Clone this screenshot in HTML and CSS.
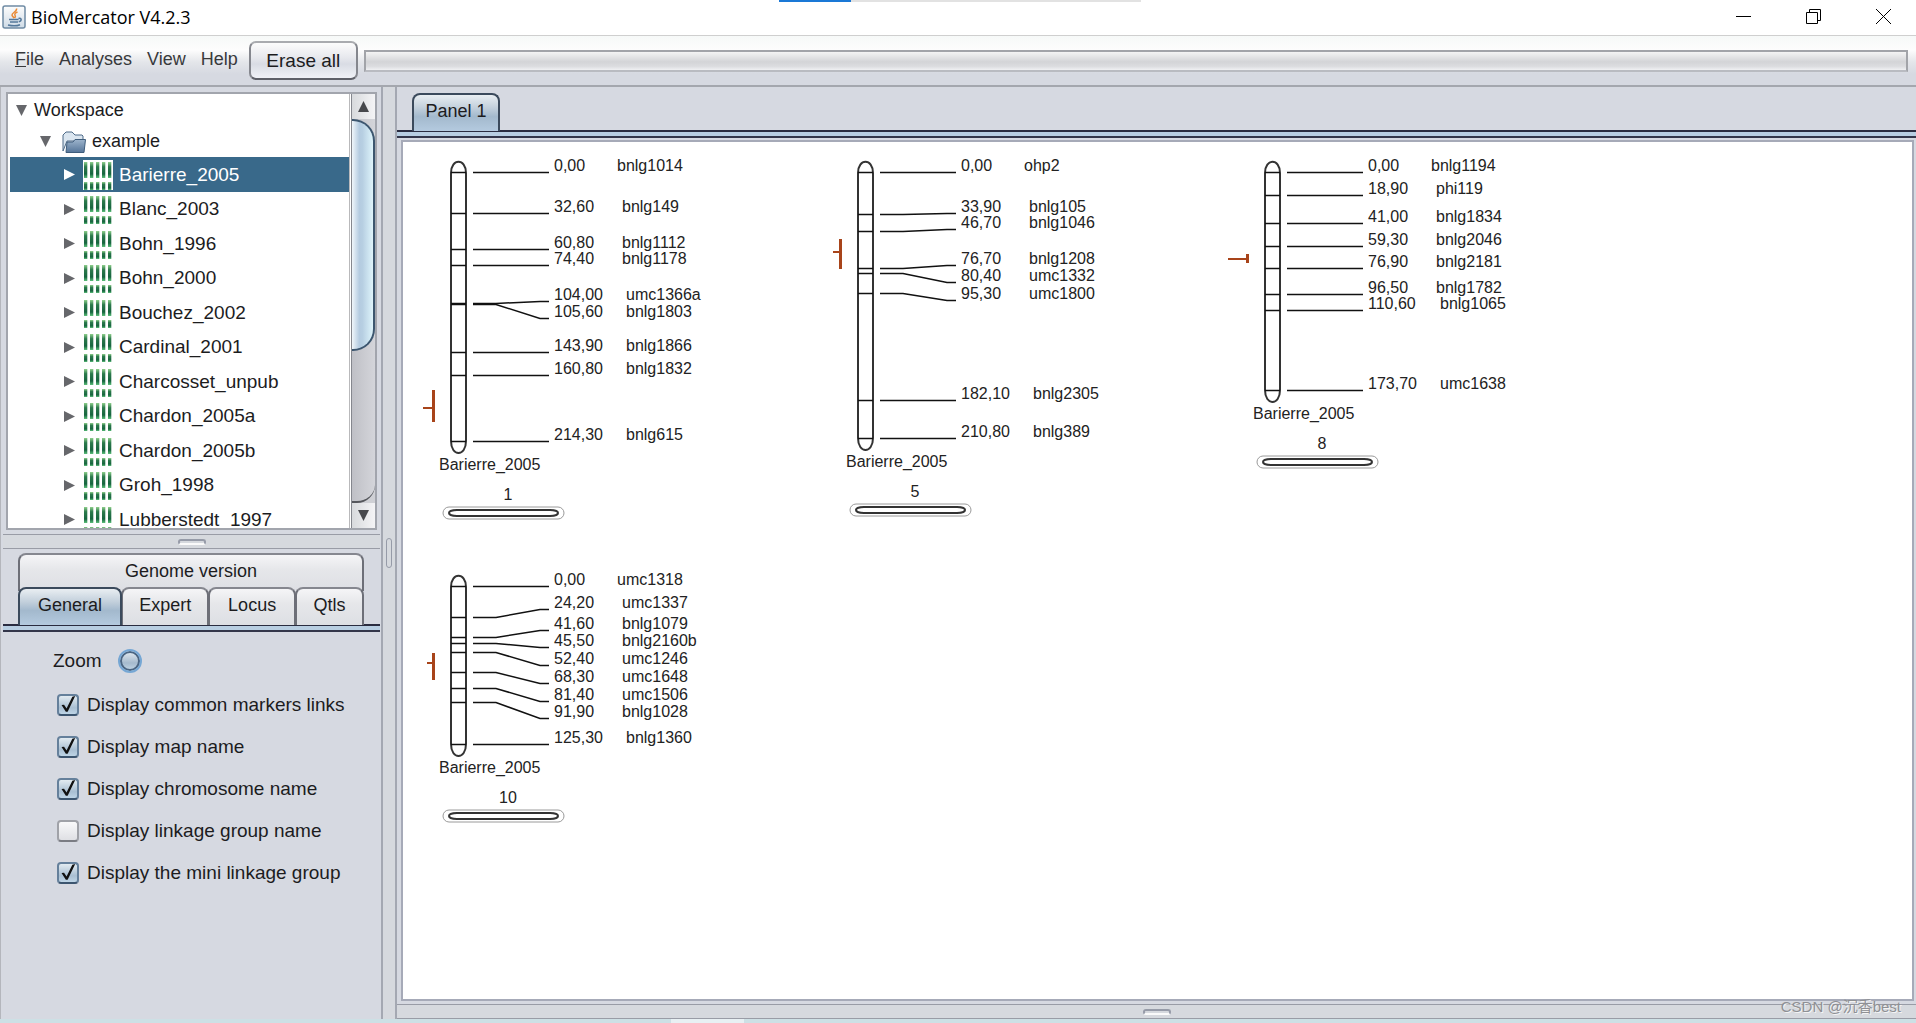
FILE: index.html
```
<!DOCTYPE html>
<html lang="en">
<head>
  <meta charset="UTF-8" />
  <meta name="viewport" content="width=device-width, initial-scale=1.0"/>
  <title>BioMercator V4.2.3</title>
  <link rel="stylesheet" href="styles.css">
</head>
<body>
  <svg class="defs" width="0" height="0" aria-hidden="true">
    <defs>
      <linearGradient id="green" x1="0" y1="0" x2="0" y2="1">
        <stop offset="0" stop-color="#8fd08c"/>
        <stop offset=".3" stop-color="#2c7a4c"/>
        <stop offset=".75" stop-color="#17653f"/>
        <stop offset="1" stop-color="#5cc07a"/>
      </linearGradient>
      <linearGradient id="folder" x1="0" y1="0" x2="0" y2="1">
        <stop offset="0" stop-color="#9db4cc"/>
        <stop offset="1" stop-color="#557599"/>
      </linearGradient>
      <linearGradient id="cup" x1="0" y1="0" x2="0" y2="1">
        <stop offset="0" stop-color="#fdfdfd"/>
        <stop offset="1" stop-color="#cfdbe6"/>
      </linearGradient>
      <symbol id="map-icon" viewBox="0 0 30 30">
        <g fill="url(#green)">
          <rect x="1" y="2" width="3.3" height="16"/><rect x="1" y="22" width="3.3" height="8"/>
          <rect x="7" y="2" width="3.3" height="16"/><rect x="7" y="22" width="3.3" height="8"/>
          <rect x="13" y="2" width="3.3" height="16"/><rect x="13" y="22" width="3.3" height="8"/>
          <rect x="19" y="2" width="3.3" height="16"/><rect x="19" y="22" width="3.3" height="8"/>
          <rect x="25" y="2" width="3.3" height="16"/><rect x="25" y="22" width="3.3" height="8"/>
        </g>
      </symbol>
    </defs>
  </svg>

  <header class="titlebar">
    <div class="load-strip"></div>
    <svg class="app-icon" width="24" height="24" viewBox="0 0 24 24">
      <rect x="1" y="1" width="22" height="22" rx="2" fill="url(#cup)" stroke="#6f8ba4" stroke-width="1.5"/>
      <path d="M14.5 3.5c1 3-5 4.200-4.500 6.700.2 1.200 1.500 1.800 2 3M15.500 7c-2 .8-3.200 1.800-2.500 3.200.6 1 .8 1.700-.3 2.700" fill="none" stroke="#ea8a35" stroke-width="1.500"/>
      <path d="M7 14.500h9.500M8 17h8M6 20c4 1 9 1 12-.3M16.500 13.500c3.500-1 3.500 2.500.2 3.200" fill="none" stroke="#54789b" stroke-width="1.500"/>
    </svg>
    <h1 class="title">BioMercator V4.2.3</h1>
    <div class="window-controls">
      <button type="button" aria-label="Minimize"><svg width="15" height="15"><path d="M0 7.500h15"/></svg></button>
      <button type="button" aria-label="Restore"><svg width="15" height="15"><path d="M.5 3.500h11v11h-11zM3.500 3.500v-3h11v11h-3"/></svg></button>
      <button type="button" aria-label="Close"><svg width="15" height="15"><path d="M0 0l15 15M15 0L0 15"/></svg></button>
    </div>
  </header>

  <div class="menubar">
    <nav class="menus">
      <a href="#"><u>F</u>ile</a>
      <a href="#">Analyses</a>
      <a href="#">View</a>
      <a href="#">Help</a>
    </nav>
    <button type="button" class="erase">Erase all</button>
    <progress value="0" max="100" aria-label="Progress"></progress>
  </div>

  <main class="workspace">
    <aside class="sidebar">
      <div class="tree-box">
        <ul class="tree">
          <li class="root"><svg class="arrow" width="11" height="11"><path d="M0 0h11L5.500 11z"/></svg>Workspace</li>
          <li class="project"><svg class="arrow" width="11" height="11"><path d="M0 0h11L5.500 11z"/></svg>
            <svg class="folder" width="24" height="24" viewBox="0 0 24 24">
              <path d="M1 21V5l3-3h6l3 3h7l1 1v5H5z" fill="#dbe6f0" stroke="#4f6b88"/>
              <path d="M4 22.500L5 12h6l2-2.500h10.500L22 22.500z" fill="url(#folder)" stroke="#3f5d7c"/>
            </svg>example</li>
          <li class="map selected"><svg class="arrow" width="11" height="11"><path d="M0 0v11l11-5.500z"/></svg><svg class="icon"><use href="#map-icon"/></svg>Barierre_2005</li>
          <li class="map"><svg class="arrow" width="11" height="11"><path d="M0 0v11l11-5.500z"/></svg><svg class="icon"><use href="#map-icon"/></svg>Blanc_2003</li>
          <li class="map"><svg class="arrow" width="11" height="11"><path d="M0 0v11l11-5.500z"/></svg><svg class="icon"><use href="#map-icon"/></svg>Bohn_1996</li>
          <li class="map"><svg class="arrow" width="11" height="11"><path d="M0 0v11l11-5.500z"/></svg><svg class="icon"><use href="#map-icon"/></svg>Bohn_2000</li>
          <li class="map"><svg class="arrow" width="11" height="11"><path d="M0 0v11l11-5.500z"/></svg><svg class="icon"><use href="#map-icon"/></svg>Bouchez_2002</li>
          <li class="map"><svg class="arrow" width="11" height="11"><path d="M0 0v11l11-5.500z"/></svg><svg class="icon"><use href="#map-icon"/></svg>Cardinal_2001</li>
          <li class="map"><svg class="arrow" width="11" height="11"><path d="M0 0v11l11-5.500z"/></svg><svg class="icon"><use href="#map-icon"/></svg>Charcosset_unpub</li>
          <li class="map"><svg class="arrow" width="11" height="11"><path d="M0 0v11l11-5.500z"/></svg><svg class="icon"><use href="#map-icon"/></svg>Chardon_2005a</li>
          <li class="map"><svg class="arrow" width="11" height="11"><path d="M0 0v11l11-5.500z"/></svg><svg class="icon"><use href="#map-icon"/></svg>Chardon_2005b</li>
          <li class="map"><svg class="arrow" width="11" height="11"><path d="M0 0v11l11-5.500z"/></svg><svg class="icon"><use href="#map-icon"/></svg>Groh_1998</li>
          <li class="map"><svg class="arrow" width="11" height="11"><path d="M0 0v11l11-5.500z"/></svg><svg class="icon"><use href="#map-icon"/></svg>Lubberstedt_1997</li>
        </ul>
        <div class="scrollbar">
          <button type="button" aria-label="Scroll up"><svg width="11" height="11"><path d="M0 11h11L5.500 0z"/></svg></button>
          <div class="track"><div class="thumb"></div></div>
          <button type="button" aria-label="Scroll down"><svg width="11" height="11"><path d="M0 0h11L5.500 11z"/></svg></button>
        </div>
      </div>

      <div class="divider-h"><span class="grip"></span></div>

      <div class="options">
        <div class="tabs">
          <button type="button" class="tab wide">Genome version</button>
          <div class="tab-row">
            <button type="button" class="tab general active">General</button>
            <button type="button" class="tab expert">Expert</button>
            <button type="button" class="tab locus">Locus</button>
            <button type="button" class="tab qtls">Qtls</button>
          </div>
        </div>
        <div class="tab-line"></div>
        <form class="settings">
          <label class="zoom">Zoom <input type="range" /></label>
          <label><input type="checkbox" checked /> Display common markers links</label>
          <label><input type="checkbox" checked /> Display map name</label>
          <label><input type="checkbox" checked /> Display chromosome name</label>
          <label><input type="checkbox" /> Display linkage group name</label>
          <label><input type="checkbox" checked /> Display the mini linkage group</label>
        </form>
      </div>
    </aside>

    <div class="divider-v"><span class="grip"></span></div>

    <section class="panel">
      <div class="panel-tabs"><button type="button" class="tab active">Panel 1</button></div>
      <div class="tab-line"></div>
      <div class="canvas" id="canvas"></div>
      <div class="divider-h"><span class="grip"></span></div>
    </section>
  </main>

  <footer class="desktop"><span></span></footer>
  <div class="watermark">CSDN @沉香best</div>

  <script src="script.js"></script>
</body>
</html>
```
FILE: styles.css
```
* {
  box-sizing: border-box;
}

body {
  margin: 0;
  height: 100vh;
  display: flex;
  flex-direction: column;
  overflow: hidden;
  background: #d6d9e1;
  color: #1c1c1e;
  font-family: "Liberation Sans", Arial, sans-serif;
  font-size: 18px;
}

button {
  font: inherit;
  color: inherit;
  padding: 0;
  border: none;
  background: none;
}

.defs {
  position: absolute;
}

/* title bar */
.titlebar {
  position: relative;
  display: flex;
  align-items: center;
  height: 36px;
  flex: none;
  padding: 0 8px 2px 2px;
  background: #fff;
  border-bottom: 1px solid #cfcfcf;
}

.load-strip {
  position: absolute;
  top: 0;
  left: 779px;
  width: 362px;
  height: 2px;
  background: linear-gradient(to right, #1a78d6 72px, #e2e2e2 72px);
}

.title {
  flex: 1;
  margin: 0 0 0 5px;
  color: #000;
  font-family: "Open Sans", "Noto Sans", sans-serif;
  font-size: 18px;
  font-weight: 400;
}

.window-controls {
  display: flex;
  gap: 20px;
}

.window-controls button {
  display: flex;
  align-items: center;
  justify-content: center;
  width: 50px;
  height: 32px;
}

.window-controls svg {
  fill: none;
  stroke: #000;
}

/* menu */
.menubar {
  display: flex;
  align-items: center;
  flex: none;
  height: 51px;
  padding: 0 8px 0 15px;
  gap: 6px;
  background: linear-gradient(#f6f9f8 0, #fdfdfd 14px, #e4e6ea 26px, #d6d9e1 38px);
  border-bottom: 2px solid #a4a7ae;
}

.menus {
  display: flex;
  gap: 15px;
  padding: 0 5px 4px 0;
}

.menus a {
  color: #38393c;
  line-height: 24px;
  text-decoration: none;
}

.erase {
  width: 109px;
  height: 39px;
  border: 2px solid #85878e;
  border-top-color: #a9abaf;
  border-bottom-color: #5e6068;
  border-radius: 7px;
  background: linear-gradient(#fcfcfc, #e8e9ee 40%, #d9dce4 60%, #f0f2f7);
  font-size: 19px;
}

progress {
  flex: 1;
  height: 22px;
  appearance: none;
  border: 2px solid #a2a4a9;
  border-bottom-color: #b9bbc1;
}

progress::-webkit-progress-bar {
  background: linear-gradient(#f4f4f4, #d3d4d7 55%, #dcdde0 80%, #f0f1f3);
}

/* main split */
.workspace {
  flex: 1;
  display: flex;
  min-height: 0;
}

.sidebar {
  width: 381px;
  flex: none;
  display: flex;
  flex-direction: column;
  border-left: 1px solid #b4b6bc;
  padding-top: 5px;
}

.divider-v {
  width: 16px;
  flex: none;
  display: flex;
  align-items: center;
  justify-content: center;
  border-left: 2px solid #a4a8b2;
  border-right: 2px solid #a4a8b2;
  background: #d6d9de;
}

.divider-v .grip {
  width: 6px;
  height: 30px;
  border: 1px solid #969ba8;
  border-radius: 3px;
}

.divider-h {
  flex: none;
  display: flex;
  align-items: center;
  justify-content: center;
  height: 15px;
  border-top: 1px solid #999ca6;
  border-bottom: 1px solid #999ca6;
  background: #d6d9de;
}

.divider-h .grip {
  width: 28px;
  height: 6px;
  border: 2px solid #969ba8;
  border-bottom: 2px solid #fafafa;
  border-radius: 3px;
}

.sidebar .divider-h {
  margin: 4px 1px 0 2px;
}

/* tree */
.tree-box {
  display: flex;
  flex: none;
  height: 438px;
  margin: 0 4px 0 5px;
  border: 2px solid #a2a5ad;
  background: #fff;
}

.tree {
  flex: 1;
  margin: 0;
  padding: 1px 0 0 2px;
  overflow: hidden;
  list-style: none;
  border-right: 1px solid #b9b9bb;
}

.tree li {
  display: flex;
  align-items: center;
  height: 34px;
}

.tree li:nth-child(odd) {
  height: 35px;
}

.tree li.root {
  height: 31px;
  padding-left: 6px;
  gap: 7px;
}

.tree li.project {
  height: 31px;
  padding-left: 30px;
  gap: 6px;
}

.project .folder {
  margin-left: 5px;
}

.tree li.map {
  padding-left: 54px;
  font-size: 19px;
}

.tree li.selected {
  background: #39698a;
  color: #fff;
}

.arrow {
  flex: none;
  fill: #66676b;
}

.selected .arrow {
  fill: #fff;
}

.icon {
  flex: none;
  width: 30px;
  height: 30px;
  margin: 0 6px 0 8px;
  background: #fff;
}

.scrollbar {
  display: flex;
  flex-direction: column;
  width: 24px;
  margin-left: 1px;
  border-left: 1px solid #85878e;
  background: #cfd0d5;
}

.scrollbar button {
  display: flex;
  align-items: center;
  justify-content: center;
  height: 25px;
  background: linear-gradient(to right, #d8dadd, #f4f4f6);
}

.scrollbar svg {
  fill: #47484c;
}

.track {
  flex: 1;
  background: linear-gradient(to right, #bfc0c6, #d4d5da);
  border-bottom: 2px solid #55575c;
  border-bottom-right-radius: 18px;
}

.thumb {
  height: 232px;
  border: 2px solid #3c566f;
  border-left: none;
  border-radius: 0 22px 22px 0;
  background: linear-gradient(to right, #f0f6fa, #b4cbe0 35%, #b7cfe2 50%, #def4fb);
}

/* tabs */
.tabs {
  margin: 4px 17px 0 17px;
}

.tab {
  height: 38px;
  border: 2px solid #6d6f78;
  border-top-color: #85878f;
  border-bottom: none;
  border-radius: 8px 8px 0 0;
  background: linear-gradient(#f5f5f7, #e6e7ea 40%, #dddfe4);
}

.tab.wide {
  display: block;
  width: 100%;
  padding-bottom: 4px;
}

.tab-row {
  display: flex;
  margin-top: -4px;
}

.tab-row .tab {
  padding-bottom: 4px;
  margin-right: -1px;
}

.general {
  flex: 105;
}

.expert,
.locus {
  flex: 88;
}

.tab-row .qtls {
  flex: 68;
  margin-right: 0;
}

.tab.active {
  position: relative;
  border-color: #3b4a5c;
  background: linear-gradient(#e9eef2, #c3d0dc 35%, #a3b9cd 60%, #b4cadf);
}

.tab-line {
  flex: none;
  height: 8px;
  margin: -1px 1px 0 2px;
  border-top: 2px solid #2a2c40;
  border-bottom: 2px solid #33364a;
  background: #b8cee2;
}

.settings {
  padding: 7px 0 0 52px;
  font-size: 19px;
}

.settings label {
  display: flex;
  align-items: center;
  height: 42px;
  padding-left: 4px;
  gap: 8px;
}

.settings .zoom {
  height: 44px;
  margin-bottom: 1px;
  padding-left: 0;
  gap: 16px;
}

input[type="range"] {
  appearance: none;
  width: 24px;
  height: 24px;
  margin: 0;
  background: none;
}

input[type="range"]::-webkit-slider-thumb {
  appearance: none;
  width: 24px;
  height: 24px;
  border: 2px solid #76a7d4;
  border-radius: 50%;
  box-shadow: inset 0 0 0 2px #4a6582;
  background: linear-gradient(#e6edf2, #a5bacd 60%, #c3d8e8);
}

input[type="checkbox"] {
  appearance: none;
  position: relative;
  width: 22px;
  height: 22px;
  margin: 0;
  border: 2px solid #a0a2a8;
  border-bottom-color: #7a7c83;
  border-radius: 4px;
  background: linear-gradient(#f9f9fa, #dfe0e4);
}

input[type="checkbox"]:checked {
  border-color: #65809b;
  border-bottom-color: #3c556f;
  background: linear-gradient(#e2ebf1, #a9bfd2 65%, #bed5e6);
}

input[type="checkbox"]:checked::after {
  content: "";
  position: absolute;
  inset: 0;
  background: #111;
  clip-path: polygon(14% 50%, 28% 48%, 42% 70%, 74% 4%, 90% 0, 48% 88%, 38% 88%);
}

/* drawing panel */
.panel {
  flex: 1;
  display: flex;
  flex-direction: column;
  min-width: 0;
}

.panel-tabs {
  padding: 6px 0 0 15px;
}

.panel-tabs .tab {
  display: block;
  width: 88px;
  height: 38px;
  padding-bottom: 3px;
}

.panel .tab-line {
  margin: -1px 0 2px 0;
}

.canvas {
  flex: 1;
  display: grid;
  grid-template-columns: repeat(auto-fill, 407px);
  grid-auto-rows: 414px;
  margin: 0 2px 3px 4px;
  overflow: hidden;
  border: 2px solid #a6aab8;
  background: #fff;
}

.group {
  display: block;
  width: 407px;
  height: 414px;
  font-size: 16px;
}

.group text {
  fill: #222;
}

.group .outline {
  fill: none;
  stroke: #333;
  stroke-width: 2;
}

.group .line {
  fill: none;
  stroke: #111;
  stroke-width: 1.5;
}

.group .qtl {
  fill: none;
  stroke: #a8441a;
}

.group .mini-outer {
  fill: #fff;
  stroke: #9a9a9a;
}

/* bottom edge */
.desktop {
  flex: none;
  height: 4px;
  padding-left: 671px;
  background: #cde0e5;
}

.desktop span {
  display: block;
  width: 73px;
  height: 4px;
  background: #e8f0f3;
}

.watermark {
  position: absolute;
  right: 15px;
  bottom: 6px;
  color: #8f9094;
  font-family: "Liberation Sans", "Noto Sans CJK SC", sans-serif;
  font-size: 15px;
  line-height: 20px;
  text-shadow: 1px 1px 0 #f4f4f4;
}
```
FILE: script.js
```
// each marker: [position, name, tick y, label y]
const groups = [
  {
    number: "1",
    qtl: { top: 248, bottom: 280, y: 266, x: 20 },
    markers: [
      ["0,00", "bnlg1014", 30, 30],
      ["32,60", "bnlg149", 71, 71],
      ["60,80", "bnlg1112", 107, 107],
      ["74,40", "bnlg1178", 123, 123],
      ["104,00", "umc1366a", 161, 159],
      ["105,60", "bnlg1803", 162, 176],
      ["143,90", "bnlg1866", 210, 210],
      ["160,80", "bnlg1832", 233, 233],
      ["214,30", "bnlg615", 299, 299]
    ]
  },
  {
    number: "5",
    qtl: { top: 97, bottom: 127, y: 110, x: 23 },
    markers: [
      ["0,00", "ohp2", 30, 30],
      ["33,90", "bnlg105", 72, 71],
      ["46,70", "bnlg1046", 89, 87],
      ["76,70", "bnlg1208", 126, 123],
      ["80,40", "umc1332", 131, 140],
      ["95,30", "umc1800", 151, 158],
      ["182,10", "bnlg2305", 258, 258],
      ["210,80", "bnlg389", 296, 296]
    ]
  },
  {
    number: "8",
    qtl: { top: 112, bottom: 121, y: 117, x: 11 },
    markers: [
      ["0,00", "bnlg1194", 30, 30],
      ["18,90", "phi119", 53, 53],
      ["41,00", "bnlg1834", 81, 81],
      ["59,30", "bnlg2046", 104, 104],
      ["76,90", "bnlg2181", 126, 126],
      ["96,50", "bnlg1782", 152, 152],
      ["110,60", "bnlg1065", 168, 168],
      ["173,70", "umc1638", 248, 248]
    ]
  },
  {
    number: "10",
    qtl: { top: 97, bottom: 124, y: 107, x: 24 },
    markers: [
      ["0,00", "umc1318", 30, 30],
      ["24,20", "umc1337", 61, 53],
      ["41,60", "bnlg1079", 81, 74],
      ["45,50", "bnlg2160b", 87, 91],
      ["52,40", "umc1246", 96, 109],
      ["68,30", "umc1648", 116, 127],
      ["81,40", "umc1506", 132, 145],
      ["91,90", "bnlg1028", 146, 162],
      ["125,30", "bnlg1360", 188, 188]
    ]
  }
];

// the name column shifts right as the position text gets longer
const nameX = { 4: 214, 5: 219, 6: 223 };

function drawGroup(g) {
  const last = g.markers[g.markers.length - 1][2];
  const end = last + 12;
  const q = g.qtl;

  let out = `<path class="outline" d="M48 31C48 16 63 16 63 31V${last}C63 ${end + 4} 48 ${end + 4} 48 ${last}Z"/>`;
  out += `<path class="qtl" stroke-width="3" d="M30.5 ${q.top}V${q.bottom}"/>`;
  out += `<path class="qtl" stroke-width="2" d="M${q.x} ${q.y}H30"/>`;

  for (const [pos, name, tick, label] of g.markers) {
    out += `<path class="line" d="M48 ${tick + 0.5}H63M70 ${tick + 0.5}H93L137 ${label + 0.5}H146"/>`;
    out += `<text x="151" y="${label - 1}">${pos}</text>`;
    out += `<text x="${nameX[pos.length]}" y="${label - 1}">${name}</text>`;
  }

  out += `<text x="36" y="${end + 17}">Barierre_2005</text>`;
  out += `<text x="105" y="${end + 47}" text-anchor="middle">${g.number}</text>`;
  out += `<rect class="mini-outer" x="40" y="${end + 54}" width="121" height="12" rx="6"/>`;
  out += `<rect class="outline" x="46" y="${end + 57}" width="109" height="6" rx="8"/>`;

  return `<svg class="group" role="img" aria-label="Linkage group ${g.number}">${out}</svg>`;
}

document.getElementById("canvas").innerHTML = groups.map(drawGroup).join("");
```
